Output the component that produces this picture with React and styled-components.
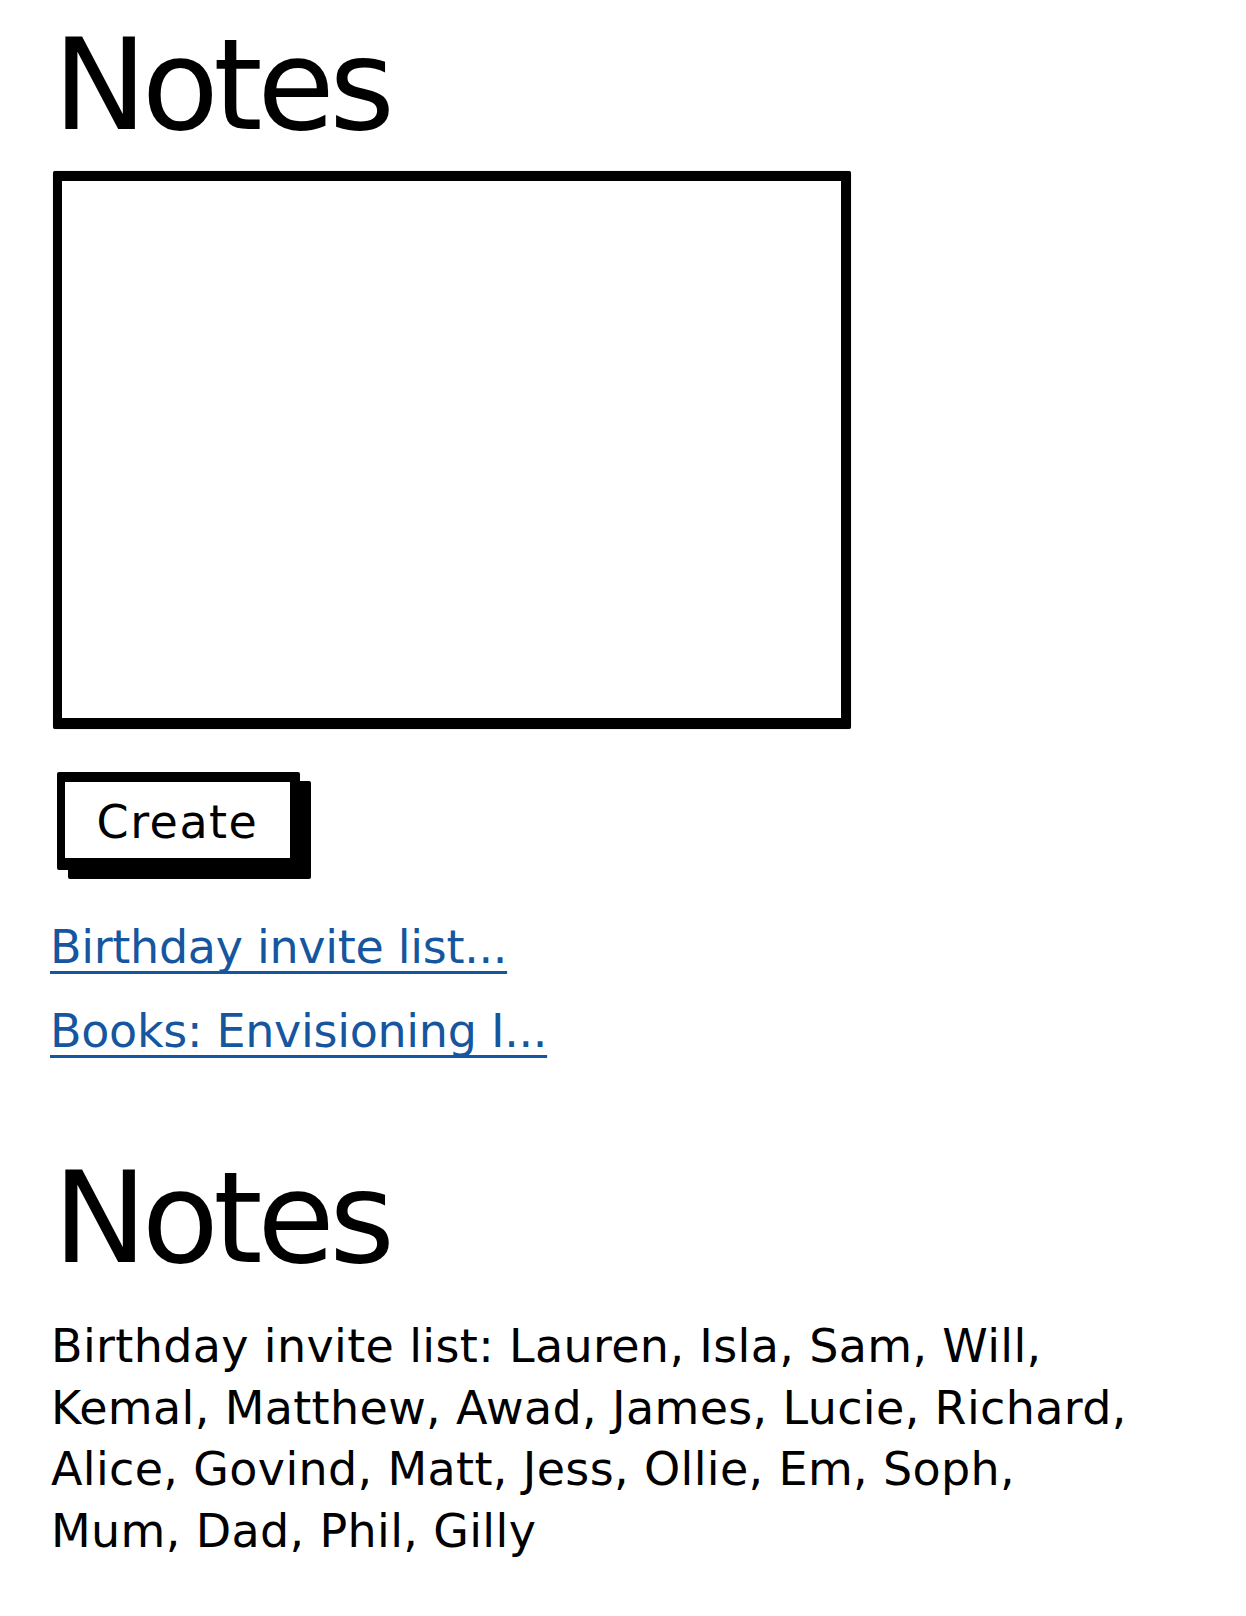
import React from 'react';
import styled, { createGlobalStyle } from 'styled-components';

const GlobalStyle = createGlobalStyle`
  body {
    margin: 0;
    background: #fff;
    color: #000;
    font-family: "DejaVu Sans", sans-serif;
  }
`;

const Page = styled.main`
  max-width: 1089px;
  padding: 22px 0 60px 51px;
`;

const Heading = styled.h1`
  margin: 0 0 0 2px;
  font-size: 126px;
  line-height: 127px;
  font-weight: 400;
  letter-spacing: -5.5px;
`;

const NoteForm = styled.form`
  display: flex;
  flex-direction: column;
  align-items: flex-start;
  margin-top: 22px;
`;

const NoteInput = styled.textarea`
  display: block;
  box-sizing: border-box;
  width: 798px;
  height: 558px;
  margin: 0 0 0 2px;
  border-style: solid;
  border-color: #000;
  border-width: 10px 10px 11px 9px;
  border-radius: 2px;
  box-shadow: 0 0 1px rgba(0, 0, 0, 0.5);
  resize: none;
  outline: none;
  font: inherit;
  background: #fff;
`;

const CreateButton = styled.button`
  display: flex;
  align-items: center;
  justify-content: center;
  box-sizing: border-box;
  width: 243px;
  height: 98px;
  margin: 43px 0 0 6px;
  padding: 4px 0 0;
  border-style: solid;
  border-color: #000;
  border-width: 10px 10px 12px 8px;
  border-radius: 2px;
  background: #fff;
  box-shadow: 11px 9px 0 #000;
  color: #000;
  font-family: "DejaVu Sans", sans-serif;
  font-size: 46px;
  letter-spacing: 1.5px;
  cursor: pointer;
`;

const NoteList = styled.ul`
  list-style: none;
  margin: 50px 0 0;
  padding: 0;
  display: flex;
  flex-direction: column;
  gap: 29px;
`;

const NoteLink = styled.a`
  display: inline-block;
  margin-left: -1px;
  font-size: 46px;
  line-height: 55px;
  letter-spacing: -0.3px;
  color: #16569e;
  text-decoration: underline;
  text-decoration-thickness: 3px;
  text-underline-offset: 8px;
  text-decoration-skip-ink: none;
`;

const NoteView = styled.section`
  margin-top: 96px;
`;

const NoteBody = styled.p`
  margin: 34px 0 0;
  font-size: 46px;
  line-height: 61.7px;
  letter-spacing: 0.35px;
`;

const notes = [
  {
    id: 1,
    title: 'Birthday invite list...',
    body: 'Birthday invite list: Lauren, Isla, Sam, Will, Kemal, Matthew, Awad, James, Lucie, Richard, Alice, Govind, Matt, Jess, Ollie, Em, Soph, Mum, Dad, Phil, Gilly',
  },
  { id: 2, title: 'Books: Envisioning I...', body: '' },
];

export default function App() {
  const [text, setText] = React.useState('');
  const selected = notes[0];

  const handleSubmit = (e) => {
    e.preventDefault();
  };

  return (
    <>
      <GlobalStyle />
      <Page>
        <Heading>Notes</Heading>
        <NoteForm onSubmit={handleSubmit}>
          <NoteInput value={text} onChange={(e) => setText(e.target.value)} />
          <CreateButton type="submit">Create</CreateButton>
        </NoteForm>
        <NoteList>
          {notes.map((note) => (
            <li key={note.id}>
              <NoteLink href={`#note-${note.id}`}>{note.title}</NoteLink>
            </li>
          ))}
        </NoteList>
        <NoteView>
          <Heading>Notes</Heading>
          <NoteBody>{selected.body}</NoteBody>
        </NoteView>
      </Page>
    </>
  );
}
